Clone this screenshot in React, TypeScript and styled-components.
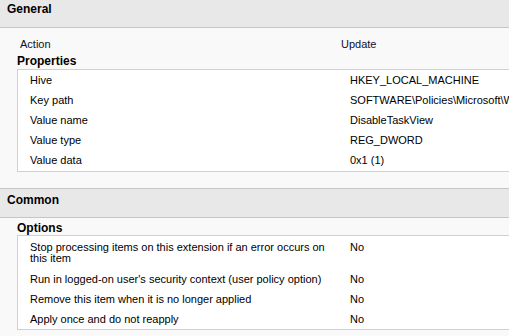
import styled, { createGlobalStyle } from "styled-components";

const GlobalStyle = createGlobalStyle`
  html, body {
    margin: 0;
    padding: 0;
    background: #f9f9f9;
    overflow: hidden;
  }
  body {
    font-family: "Liberation Sans", Arial, sans-serif;
    font-size: 11px;
    color: #000;
  }
`;

const properties = [
  ["Hive", "HKEY_LOCAL_MACHINE"],
  ["Key path", "SOFTWARE\\Policies\\Microsoft\\Windows\\Explorer"],
  ["Value name", "DisableTaskView"],
  ["Value type", "REG_DWORD"],
  ["Value data", "0x1 (1)"],
];

const options = [
  ["Stop processing items on this extension if an error occurs on this item", "No"],
  ["Run in logged-on user's security context (user policy option)", "No"],
  ["Remove this item when it is no longer applied", "No"],
  ["Apply once and do not reapply", "No"],
];

export default function App() {
  return (
    <Page>
      <GlobalStyle />
      <SectionHeader $first>General</SectionHeader>
      <ActionRow>
        <span>Action</span>
        <span>Update</span>
      </ActionRow>
      <GroupTitle>Properties</GroupTitle>
      <Box>
        {properties.map(([label, value]) => (
          <Row key={label} $labelWidth={332}>
            <Label>{label}</Label>
            <Value>{value}</Value>
          </Row>
        ))}
      </Box>
      <SectionHeader>Common</SectionHeader>
      <GroupTitle>Options</GroupTitle>
      <Box $tight>
        {options.map(([label, value]) => (
          <Row key={label} $labelWidth={332} $wrap={label.length > 66}>
            <Label>{label}</Label>
            <Value>{value}</Value>
          </Row>
        ))}
      </Box>
    </Page>
  );
}

const Page = styled.div`
  width: 509px;
  height: 336px;
  overflow: hidden;
  display: flex;
  flex-direction: column;
`;

const SectionHeader = styled.div<{ $first?: boolean }>`
  flex: none;
  box-sizing: border-box;
  height: ${(p) => (p.$first ? "28px" : "30px")};
  padding: ${(p) => (p.$first ? "3px" : "5px")} 7px 0;
  margin-top: ${(p) => (p.$first ? "0" : "16px")};
  background: #e8e8e8;
  border-top: ${(p) => (p.$first ? "none" : "1px solid #c6c6c6")};
  border-bottom: 1px solid #c6c6c6;
  font-size: 12px;
  font-weight: 700;
  line-height: 13px;
`;

const ActionRow = styled.div`
  display: grid;
  grid-template-columns: 321px 1fr;
  margin-top: 10px;
  padding-left: 20px;
  line-height: 13px;
  color: #10102a;
`;

const GroupTitle = styled.div`
  margin: 4px 0 0 17px;
  font-size: 12px;
  font-weight: 700;
  line-height: 13px;
`;

const Box = styled.div<{ $tight?: boolean }>`
  flex: none;
  margin-left: 17px;
  width: 600px;
  margin-top: ${(p) => (p.$tight ? "0" : "1px")};
  padding-bottom: ${(p) => (p.$tight ? "0" : "1px")};
  background: #fff;
  border: 1px solid #d0d0d0;
  border-right: none;
`;

const Row = styled.div<{ $labelWidth: number; $wrap?: boolean }>`
  display: grid;
  grid-template-columns: ${(p) => p.$labelWidth}px 1fr;
  align-items: start;
  padding: ${(p) => (p.$wrap ? "6px 0 5px" : "0")};
  line-height: ${(p) => (p.$wrap ? "11px" : "20px")};
`;

const Label = styled.div`
  padding: 0 12px 0 12px;
`;

const Value = styled.div`
  white-space: nowrap;
`;
